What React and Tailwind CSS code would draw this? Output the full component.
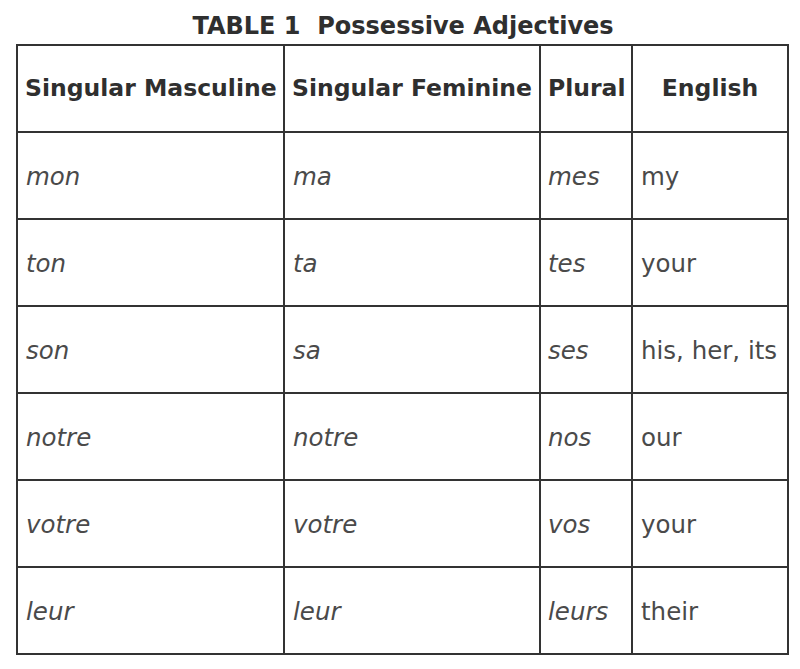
const rows = [
  ['mon', 'ma', 'mes', 'my'],
  ['ton', 'ta', 'tes', 'your'],
  ['son', 'sa', 'ses', 'his, her, its'],
  ['notre', 'notre', 'nos', 'our'],
  ['votre', 'votre', 'vos', 'your'],
  ['leur', 'leur', 'leurs', 'their'],
]

const App = () => {
  return (
    <div className="w-[800px] h-[669px] bg-white font-['DejaVu_Sans',Verdana,sans-serif] text-[#3a3a3a]">
      <div className="pt-[11px] pl-[6px] h-[44px] text-center text-[24px] font-bold leading-[30px] text-[#2f2f2f] whitespace-nowrap">
        TABLE 1&nbsp; Possessive Adjectives
      </div>
      <table className="ml-[16px] border-collapse border-2 border-[#333] table-fixed w-[771px]">
        <colgroup>
          <col className="w-[267px]" />
          <col className="w-[256px]" />
          <col className="w-[92px]" />
          <col className="w-[156px]" />
        </colgroup>
        <thead>
          <tr className="h-[87px]">
            <th className="border-2 border-[#333] pl-[7px] pr-0 text-left text-[23.5px] font-bold text-[#2f2f2f] whitespace-nowrap">
              Singular Masculine
            </th>
            <th className="border-2 border-[#333] pl-[7px] pr-0 text-left text-[23.5px] font-bold text-[#2f2f2f] whitespace-nowrap">
              Singular Feminine
            </th>
            <th className="border-2 border-[#333] pl-[7px] pr-0 text-left text-[23.5px] font-bold text-[#2f2f2f] whitespace-nowrap">
              Plural
            </th>
            <th className="border-2 border-[#333] px-0 text-center text-[23.5px] font-bold text-[#2f2f2f] whitespace-nowrap">
              English
            </th>
          </tr>
        </thead>
        <tbody>
          {rows.map((r, i) => (
            <tr key={i} className="h-[87px]">
              <td className="border-2 border-[#333] px-[8px] pt-[3px] text-[24.5px] italic text-[#4a4a4a]">{r[0]}</td>
              <td className="border-2 border-[#333] px-[8px] pt-[3px] text-[24.5px] italic text-[#4a4a4a]">{r[1]}</td>
              <td className="border-2 border-[#333] pl-[7px] pr-0 pt-[3px] text-[24.5px] italic text-[#4a4a4a]">{r[2]}</td>
              <td className="border-2 border-[#333] pl-[8px] pr-0 pt-[3px] text-[24.5px] text-[#4a4a4a] whitespace-nowrap">{r[3]}</td>
            </tr>
          ))}
        </tbody>
      </table>
    </div>
  )
}

export default App
